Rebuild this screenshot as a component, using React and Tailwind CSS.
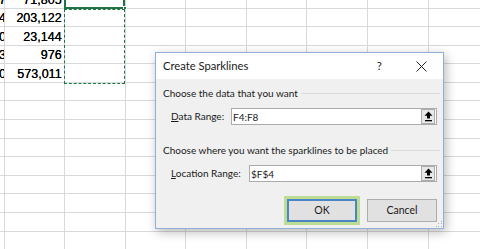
import React from "react";

const rows = [
  ["7", "71,805"],
  ["4", "203,122"],
  ["0", "23,144"],
  ["3", "976"],
  ["0", "573,011"],
  ["", ""], ["", ""], ["", ""], ["", ""], ["", ""], ["", ""], ["", ""], ["", ""], ["", ""],
];

function UpArrowButton() {
  return (
    <div className="w-[14px] h-[15px] mr-[1px] bg-[#e8e8e8] border border-[#adadad] flex items-center justify-center">
      <svg width="9" height="11" viewBox="0 0 9 11">
        <path d="M4.5 0.5 L8.5 4.8 L6 4.8 L6 7.5 L3 7.5 L3 4.8 L0.5 4.8 Z" fill="#000" />
        <rect x="1" y="9" width="7" height="1.3" fill="#000" />
      </svg>
    </div>
  );
}

function Header({ children }) {
  return (
    <div className="flex items-center h-[14px] -mr-[3px]">
      <span className="whitespace-nowrap">{children}</span>
      <div className="flex-1 h-px bg-[#dcdcdc] ml-[3px]" />
    </div>
  );
}

function RangeRow({ underline, rest, value, labelW }) {
  return (
    <div className="flex items-center h-[17px] pl-[8px]">
      <span className="whitespace-nowrap shrink-0" style={{ width: labelW }}>
        <span className="underline underline-offset-1">{underline}</span>
        {rest}
      </span>
      <div className="flex-1 h-[17px] bg-white border border-[#ababab] flex items-center justify-between pl-[1px]">
        <span className="leading-none">{value}</span>
        <UpArrowButton />
      </div>
    </div>
  );
}

export default function App() {
  return (
    <div className="relative w-[480px] h-[249px] overflow-hidden bg-white">
      <div className="flex flex-col -mt-[10.1px]">
        {rows.map(([frag, num], i) => (
          <div key={i} className="flex h-[18.6px] shrink-0 border-b border-[#d9d9d9]">
            <div className="w-[4.5px] shrink-0 border-r border-[#d9d9d9] overflow-hidden flex items-end justify-end pb-[1.5px] text-[12.5px] leading-none text-black font-['Liberation_Sans',sans-serif] [text-shadow:0_0_0.15px_#000]">
              <span className="-mr-[2.5px]">{frag}</span>
            </div>
            <div className="w-[60.6px] shrink-0 border-r border-[#d9d9d9] flex items-end justify-end pr-[2.5px] pb-[1.5px] text-[12.5px] leading-none text-black font-['Liberation_Sans',sans-serif] [text-shadow:0_0_0.15px_#000]">
              {num}
            </div>
            {Array.from({ length: 6 }).map((_, j) => (
              <div key={j} className="w-[60.6px] shrink-0 border-r border-[#d9d9d9]" />
            ))}
          </div>
        ))}
      </div>

      {/* active cell + marquee */}
      <div className="absolute left-[63.5px] top-[-12px] w-[61.5px] h-[21px] border-2 border-[#217346]" />
      <div className="absolute left-[122.5px] top-[6px] w-[4px] h-[4px] bg-[#217346] border border-white" />
      <div className="absolute left-[63.8px] top-[9px] w-[60.8px] h-[75px] border border-dashed border-[#217346]" />

      {/* dialog */}
      <div className="absolute left-[155px] top-[52px] w-[289px] h-[177px] border border-[#8fb0d4] bg-[#f0f0f0] shadow-[2px_3px_10px_rgba(0,0,0,0.28)] flex flex-col font-['Lato',sans-serif] text-[#1a1a1a]">
        <div className="h-[26px] bg-white flex items-center pl-[7px] pr-[16px] shrink-0">
          <span className="text-[11.2px] flex-1">Create Sparklines</span>
          <span className="text-[11.5px] mr-[34px]">?</span>
          <svg width="11" height="11" viewBox="0 0 11 11">
            <path d="M0.5 0.5 L10.5 10.5 M10.5 0.5 L0.5 10.5" stroke="#222" strokeWidth="1" />
          </svg>
        </div>
        <div className="flex-1 flex flex-col pl-[7px] pr-[6px] pt-[7px] text-[10px]">
          <Header>Choose the data that you want</Header>
          <div className="mt-[8px]">
            <RangeRow underline="D" rest="ata Range:" value="F4:F8" labelW="60px" />
          </div>
          <div className="mt-[18px]">
            <Header>Choose where you want the sparklines to be placed</Header>
          </div>
          <div className="mt-[8px]">
            <RangeRow underline="L" rest="ocation Range:" value="$F$4" labelW="78px" />
          </div>
          <div className="flex justify-end items-center mt-[17px] gap-[10px]">
            <div className="w-[70px] h-[23px] bg-[#e1e1e1] border-2 border-[#4a86c5] outline-[3px] outline-solid outline-[#bddd95] flex items-center justify-center text-[10.5px]">
              OK
            </div>
            <div className="w-[70px] h-[23px] bg-[#e1e1e1] border border-[#adadad] flex items-center justify-center text-[10.5px]">
              Cancel
            </div>
          </div>
        </div>
        <div className="absolute right-[1px] bottom-[1px] grid grid-cols-3 gap-[1px] w-[6px] h-[6px]">
          <span />
          <span />
          <span className="bg-[#b0b0b0] w-px h-px" />
          <span />
          <span className="bg-[#b0b0b0] w-px h-px" />
          <span className="bg-[#b0b0b0] w-px h-px" />
          <span className="bg-[#b0b0b0] w-px h-px" />
          <span className="bg-[#b0b0b0] w-px h-px" />
          <span className="bg-[#b0b0b0] w-px h-px" />
        </div>
      </div>
    </div>
  );
}
